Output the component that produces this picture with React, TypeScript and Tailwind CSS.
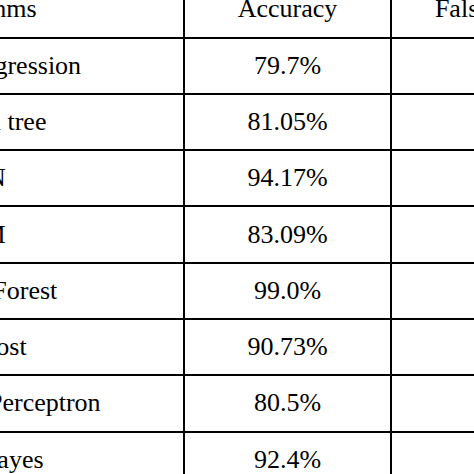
import React from "react";

const rows: [string, string][] = [
  ["Logistic Regression", "79.7%"],
  ["Decision tree", "81.05%"],
  ["KNN", "94.17%"],
  ["SVM", "83.09%"],
  ["Random Forest", "99.0%"],
  ["XGBoost", "90.73%"],
  ["Multi-Layer Perceptron", "80.5%"],
  ["Naive Bayes", "92.4%"],
  ["", ""],
];

function Row({ a, b, c }: { a: string; b: string; c: string }) {
  return (
    <div className="flex h-[56.3px] shrink-0 border-b-2 border-black">
      <div className="flex w-[413px] shrink-0 items-center justify-center whitespace-nowrap border-r-2 border-black">
        {a}
      </div>
      <div className="flex w-[207px] shrink-0 items-center justify-center whitespace-nowrap border-r-2 border-black">
        {b}
      </div>
      <div className="flex w-[231px] shrink-0 items-center justify-center whitespace-nowrap">
        {c}
      </div>
    </div>
  );
}

export default function App() {
  return (
    <div className="relative h-[474px] w-[474px] overflow-hidden bg-white">
      <div className="ml-[-228px] mt-[-17.8px] flex w-[851px] flex-col font-['Liberation_Serif','Times_New_Roman',serif] text-[26px] leading-none text-black">
        <Row a="Algorithms" b="Accuracy" c="False Positive" />
        {rows.map(([a, b], i) => (
          <Row key={i} a={a} b={b} c="" />
        ))}
      </div>
    </div>
  );
}
